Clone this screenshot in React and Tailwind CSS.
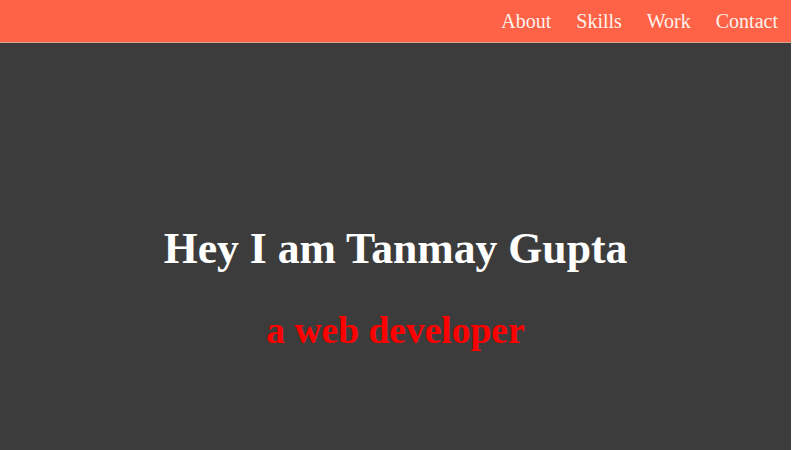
import React from "react";

function App() {
  return (
    <div className="w-[791px] h-[450px] bg-[#3c3c3c] font-['Liberation_Serif',serif] flex flex-col">
      <nav className="h-[43px] bg-[#ff6347] border-b border-[#d8a394] flex items-center justify-end pr-[13px]">
        <ul className="flex gap-[25px] text-[20px] text-[#fdf3ee]">
          <li>About</li>
          <li>Skills</li>
          <li>Work</li>
          <li>Contact</li>
        </ul>
      </nav>
      <main className="flex-1 flex flex-col items-center pt-[184px]">
        <h1 className="text-[43.7px] font-bold text-white leading-none">
          Hey I am Tanmay Gupta
        </h1>
        <h2 className="text-[37.5px] font-bold text-[#ff0000] leading-none mt-[41px]">
          a web developer
        </h2>
      </main>
    </div>
  );
}

export default App;
